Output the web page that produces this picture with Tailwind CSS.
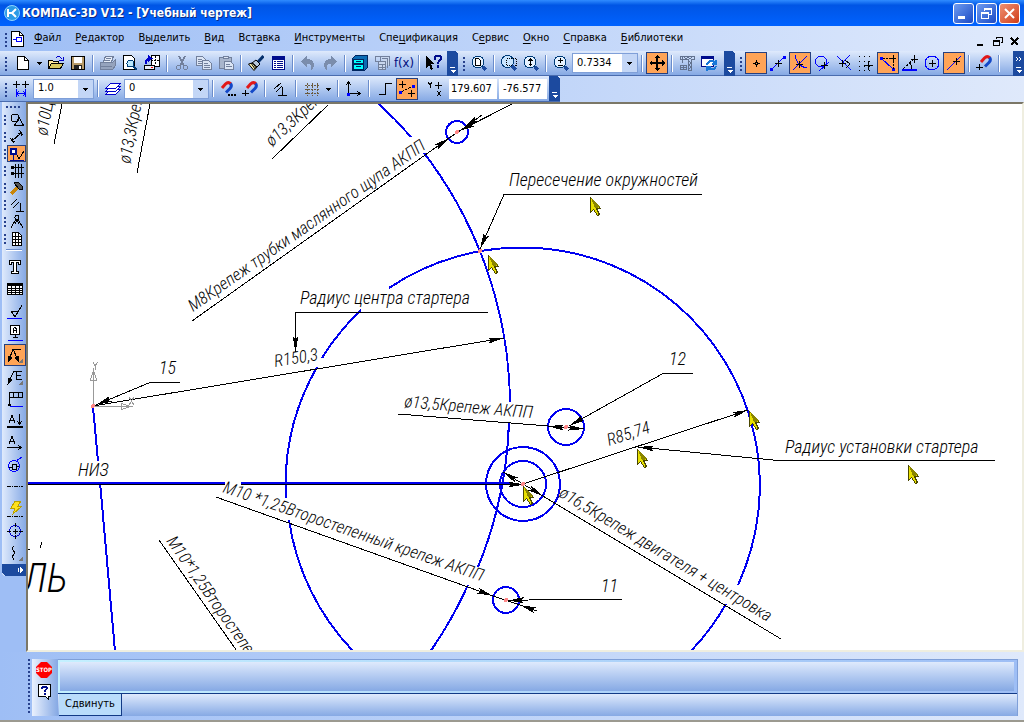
<!DOCTYPE html>
<html lang="ru">
<head>
    <meta charset="UTF-8">
    <meta name="viewport" content="width=device-width, initial-scale=1.0">
    <title>КОМПАС-3D V12 - [Учебный чертеж]</title>
    <script src="https://cdn.jsdelivr.net/npm/@tailwindcss/browser@4"></script>
</head>
<body class="bg-[#9ebef5] font-['DejaVu_Sans_Condensed','DejaVu_Sans',sans-serif] text-[11px] text-black">
<div class="flex flex-col h-screen overflow-hidden fill-none stroke-black [shape-rendering:crispEdges]">

    <!-- Title bar -->
    <header class="flex items-center h-[26px] shrink-0 px-1 bg-linear-to-b from-[#2f8bff] via-[#0055e5] via-20% to-[#0062ff]">
        <svg class="w-4 h-4 [shape-rendering:auto]" viewBox="0 0 16 16"><circle cx="8" cy="8" r="7.5" fill="#2b9be6" stroke="#8fd4ff"/><path d="M4 4v8M5 8h3M12 4 8 8l4 4" stroke="#fff" stroke-width="2"/></svg>
        <h1 class="flex-1 ml-[2px] text-[12px] font-bold text-white [text-shadow:1px_1px_#0b2a80]">КОМПАС-3D V12 - [Учебный чертеж]</h1>
        <div class="flex gap-[2px]">
            <button aria-label="Свернуть" class="w-[21px] h-[21px] rounded-[3px] border border-white bg-linear-to-br from-[#6f9bf0] to-[#1c48c4]"><svg class="w-[19px] h-[19px]" viewBox="0 0 19 19"><path d="M4 13.5h7" stroke="#fff" stroke-width="3"/></svg></button>
            <button aria-label="Восстановить" class="w-[21px] h-[21px] rounded-[3px] border border-white bg-linear-to-br from-[#6f9bf0] to-[#1c48c4]"><svg class="w-[19px] h-[19px]" viewBox="0 0 19 19"><path d="M7.5 7V4.5h7v6H12M7 5h8M4.5 8.5h7v6h-7zM4 9h8" stroke="#fff"/></svg></button>
            <button aria-label="Закрыть" class="w-[21px] h-[21px] rounded-[3px] border border-white bg-linear-to-br from-[#ee8f70] to-[#cf3a12]"><svg class="w-[19px] h-[19px] [shape-rendering:auto]" viewBox="0 0 19 19"><path d="m5 5 9 9M14 5l-9 9" stroke="#fff" stroke-width="2"/></svg></button>
        </div>
    </header>

    <!-- Menu -->
    <nav class="flex items-center h-[25px] shrink-0 px-1 bg-linear-to-r from-[#9ebef5] to-[#e0eafc]">
        <svg class="w-[3px] h-4 mr-1" viewBox="0 0 3 16"><path d="M1.5 2v14" stroke="#27418d" stroke-width="2" stroke-dasharray="2 2"/></svg>
        <svg class="w-[13px] h-4" viewBox="0 0 13 16"><path d="M.5.5h8l4 4v11H.5z" fill="#fff"/><path d="M8.5.5v4h4"/><path d="M2 8.5h3M5.5 6.5h5v4h-5z" stroke="#00f"/></svg>
        <div class="flex flex-1 items-center gap-[14px] ml-[10px] [&_u]:underline-offset-2">
            <button><u>Ф</u>айл</button>
            <button><u>Р</u>едактор</button>
            <button>В<u>ы</u>делить</button>
            <button><u>В</u>ид</button>
            <button>Вст<u>а</u>вка</button>
            <button><u>И</u>нструменты</button>
            <button>Спе<u>ц</u>ификация</button>
            <button>С<u>е</u>рвис</button>
            <button><u>О</u>кно</button>
            <button><u>С</u>правка</button>
            <button><u>Б</u>иблиотеки</button>
        </div>
        <div class="flex gap-1 pt-1 [&_svg]:w-3 [&_svg]:h-3">
            <button aria-label="Свернуть документ"><svg viewBox="0 0 12 12"><path d="M1 10h6" stroke-width="2"/></svg></button>
            <button aria-label="Восстановить документ"><svg viewBox="0 0 12 12"><path d="M4.500 4V2.500h6v5H9M4 2h7M1.500 5.500h6v5h-6zM1 6h7"/></svg></button>
            <button aria-label="Закрыть документ"><svg viewBox="0 0 12 12"><path d="m3 3 7 7M10 3l-7 7" stroke-width="2"/></svg></button>
        </div>
    </nav>

    <!-- Standard, view and snap toolbars -->
    <div class="flex h-[25px] shrink-0 bg-linear-to-b from-[#dfeafc] to-[#86a9e4] border-b border-[#4a6cae] [&_button]:h-[22px] [&_button]:w-[22px] [&_button]:grid [&_button]:place-items-center [&_button>svg]:w-4 [&_button>svg]:h-4">
        <div class="flex items-center w-[458px] shrink-0 pl-1">
            <svg class="w-2 h-4" viewBox="0 0 8 16"><path d="M1.5 2v14" stroke="#27418d" stroke-width="2" stroke-dasharray="2 2"/></svg>
            <button aria-label="Создать"><svg viewBox="0 0 16 16"><path d="M2.5 1.5h7l4 4v9h-11z" fill="#fff"/><path d="M9.5 1.5v4h4"/></svg></button>
            <svg class="w-[11px] h-4" viewBox="0 0 11 16"><path d="M3 7h5L5.5 10z" fill="#000" stroke="none"/></svg>
            <button aria-label="Открыть"><svg viewBox="0 0 16 16"><path d="M.5 13.5v-8h4l1 1h5v2" fill="#ffe79a"/><path d="m.5 13.5 3-5h12l-3 5z" fill="#d8c860"/><path d="M8 3c2-2 4-2 6 1m1-2v3h-4" stroke="#00c"/></svg></button>
            <button aria-label="Сохранить"><svg viewBox="0 0 16 16"><path d="M1.5 1.5h13v13h-13z" fill="#b89c6a"/><path d="M4 2h8v6H4z" fill="#fff" stroke="none"/><path d="M4 10h8v4H4z" fill="#222" stroke="none"/><path d="M9 11h2v3H9z" fill="#fff" stroke="none"/></svg></button>
            <i class="w-[2px] h-[17px] mx-[3px] bg-[#6a8ccb] border-r border-white"></i>
            <button aria-label="Печать"><svg viewBox="0 0 16 16" stroke="#72809c"><path d="m3.5 7 2-6h8l-2 6z" fill="#e6edf8"/><path d="M.5 7.5h12l3-3v6l-3 4H.5z" fill="#95a3bd"/><path d="M6 3h5M5 5h5M1 11h11M3 14h8"/></svg></button>
            <button aria-label="Просмотр"><svg viewBox="0 0 16 16"><path d="M1.5.5h8l3 3v11h-11z" fill="#fff"/><circle cx="8.5" cy="8.5" r="3.5" fill="#bdeaff" stroke="#003c78"/><path d="m11 11 4 4" stroke="#003c78" stroke-width="2"/></svg></button>
            <button aria-label="Вывод документов"><svg viewBox="0 0 16 16"><path d="M7.5.5h8v11h-8z" fill="#fff"/><path d="M11.5 1v9M7 5.5h8" stroke-dasharray="2 1"/><path d="M.5 10.5h10v4H.5z" fill="#e8eef8"/><path d="M1.5 9C1.500 5 3 3.500 6 3.500M4 1l3 2.500L4 6" stroke="#00c" stroke-width="2"/><path d="M7 12.5h2" stroke="red"/></svg></button>
            <i class="w-[2px] h-[17px] mx-[3px] bg-[#6a8ccb] border-r border-white"></i>
            <button aria-label="Вырезать"><svg viewBox="0 0 16 16" stroke="#72809c"><path d="m5 1 5 10M11 1 6 11" stroke-width="2"/><circle cx="4.5" cy="12.5" r="2"/><circle cx="11.5" cy="12.5" r="2"/></svg></button>
            <button aria-label="Копировать"><svg viewBox="0 0 16 16" stroke="#72809c"><path d="M.5 1.5h6l3 3v6h-9z" fill="#dbe5f5"/><path d="M6.5 5.5h6l3 3v6h-9z" fill="#dbe5f5"/><path d="M2 4.5h4M2 6.5h4M2 8.5h4M8 8.5h4M8 10.5h6M8 12.5h6"/></svg></button>
            <button aria-label="Вставить"><svg viewBox="0 0 16 16" stroke="#72809c"><path d="M1.5 2.5h12v11h-12z" fill="#a8b5cc"/><path d="M5 1.5h5v2H5z" fill="#dbe5f5"/><path d="M6.5 6.5h6l3 3v5h-9z" fill="#dbe5f5"/><path d="M8 9.5h4M8 11.5h6"/></svg></button>
            <i class="w-[2px] h-[17px] mx-[3px] bg-[#6a8ccb] border-r border-white"></i>
            <button aria-label="Копировать свойства"><svg class="[shape-rendering:auto]" viewBox="0 0 16 16"><path d="m15.500 1-5.500 6" stroke="#05306c" stroke-width="3"/><path d="m8 5 4 4-3 3-5-4z" fill="#b8c9dc"/><path d="M4 8 9 12l-3 3.500L.5 9z" fill="#fff6b0"/><path d="m3 8 4 6M5.500 8.500 8 13"/></svg></button>
            <button aria-label="Свойства"><svg viewBox="0 0 16 16"><path d="M2.5 1.5h12v13h-12z" fill="#fff" stroke="#000c8c"/><path d="M2 3h13" stroke="#000c8c" stroke-width="3"/><path d="M4 6.5h2M4 8.5h2M4 10.5h2M4 12.5h2M7 6.5h6M7 8.5h6M7 10.5h6M7 12.5h6" stroke="#000c8c"/></svg></button>
            <i class="w-[2px] h-[17px] mx-[3px] bg-[#6a8ccb] border-r border-white"></i>
            <button aria-label="Отменить"><svg viewBox="0 0 16 16"><path d="M7 1v3c5 0 7 3 7 6 0 2-1 4-3 5 1-4 0-6-4-6v3L1 6.5z" fill="#7b8dac" stroke="none"/></svg></button>
            <button aria-label="Повторить"><svg viewBox="0 0 16 16"><path d="M9 1v3c-5 0-7 3-7 6 0 2 1 4 3 5-1-4 0-6 4-6v3l6-5.5z" fill="#7b8dac" stroke="none"/></svg></button>
            <i class="w-[2px] h-[17px] mx-[3px] bg-[#6a8ccb] border-r border-white"></i>
            <button aria-label="Менеджер библиотек"><svg viewBox="0 0 16 16"><path d="m.5 3.5 3-3h12v12l-3 3H.5z" fill="#0a6bb4" stroke="#00255e"/><path d="M1.5 4.5h10v4h-10zM1.500 9.500h10v5h-10z" fill="#0ff" stroke="#00255e"/><path d="M4 6.5h5M4 11.5h5" stroke="#00255e"/></svg></button>
            <button aria-label="Переменные"><svg viewBox="0 0 16 16" stroke="#72809c"><circle cx="4" cy="4" r="3"/><path d="M5.5 1.5h10v9M7.5 3.5h6v9M4.5 6.5h7v8h-7z" fill="#c9d7ee"/><path d="M4 9.5h8M4 12.5h8M8.5 9v6"/></svg></button>
            <button aria-label="Функции" class="text-[13px] text-[#000c7c]">f(x)</button>
            <i class="w-[2px] h-[17px] mx-[3px] bg-[#6a8ccb] border-r border-white"></i>
            <button aria-label="Справка"><svg viewBox="0 0 16 16"><path d="M0 1v12l3-3 2 5 2-1-2-5h4z" fill="#000" stroke="none"/><path d="M9 5V3c0-3 6-3 6 0 0 3-3 2-3 6M12 10v3" stroke="#000c8c" stroke-width="2"/></svg></button>
            <span class="flex-1"></span>
            <svg class="w-[11px] h-[25px]" viewBox="0 0 11 25"><path d="M0 0h8l3 3v22H0z" fill="#1c4a9f" stroke="none"/><path d="M3 16.5h5" stroke="#fff"/><path d="M3 19h6l-3 3z" fill="#fff" stroke="none"/></svg>
        </div>
        <div class="flex items-center w-[277px] shrink-0 pl-1">
            <svg class="w-[6px] h-4" viewBox="0 0 6 16"><path d="M1.5 2v14" stroke="#27418d" stroke-width="2" stroke-dasharray="2 2"/></svg>
            <button aria-label="Показать лист"><svg viewBox="0 0 16 16"><circle cx="7" cy="7" r="6" fill="#e6f2ff" stroke="#003c78"/><path d="M4.5 3.5h3l2 2v5h-5z" fill="#fff"/><path d="m12 12 3 3" stroke="#1c4a9f" stroke-width="3"/></svg></button>
            <i class="w-[2px] h-[17px] mx-[3px] bg-[#6a8ccb] border-r border-white"></i>
            <button aria-label="Увеличить рамкой"><svg viewBox="0 0 16 16"><circle cx="6.5" cy="6.5" r="6" fill="#c8e4ff" stroke="#003c78"/><path d="M5.5 3.5h10v7h-10z" stroke-dasharray="1 1"/><path d="m11 11 4 4" stroke="#1c4a9f" stroke-width="3"/></svg></button>
            <button aria-label="Приблизить"><svg viewBox="0 0 16 16"><circle cx="7" cy="7" r="6" fill="#e6f2ff" stroke="#003c78"/><path d="M7.5 3v8M6 4.5h3M5 5.500h5M6 9.500h3"/><path d="m12 12 3 3" stroke="#1c4a9f" stroke-width="3"/></svg></button>
            <i class="w-[2px] h-[17px] mx-[3px] bg-[#6a8ccb] border-r border-white"></i>
            <button aria-label="Масштаб"><svg viewBox="0 0 16 16"><circle cx="7" cy="7" r="6" fill="#e6f2ff" stroke="#003c78"/><path d="M7.5 3v5M5 5.5h5M5 10.5h5"/><path d="m12 12 3 3" stroke="#1c4a9f" stroke-width="3"/></svg></button>
            <label class="grid grid-cols-[1fr_15px] w-[66px] h-5 border border-[#7f9fd8] bg-white">
                <select aria-label="Масштаб вида" class="col-span-2 col-start-1 row-start-1 appearance-none pl-1 outline-none"><option>0.7334</option></select>
                <svg class="col-start-2 row-start-1 w-[15px] h-[18px] pointer-events-none" viewBox="0 0 15 18"><path d="M0 0h15v18H0z" fill="#c3d6f6" stroke="none"/><path d="M5 8h5l-2.500 3z" fill="#000" stroke="none"/></svg>
            </label>
            <i class="w-[2px] h-[17px] mx-[3px] bg-[#6a8ccb] border-r border-white"></i>
            <button aria-label="Сдвинуть" class="bg-[#ffa457] border border-[#26407f]"><svg viewBox="0 0 16 16"><path d="M8 1v14M1 8h14" stroke-width="2"/><path d="m8 0 3 3H5zM8 16l3-3H5zM0 8l3-3v6zM16 8l-3-3v6z" fill="#000" stroke="none"/></svg></button>
            <i class="w-[2px] h-[17px] mx-[3px] bg-[#6a8ccb] border-r border-white"></i>
            <button aria-label="Перестроить"><svg viewBox="0 0 16 16" stroke="#62728f"><path d="M1.5 5V1.5h14v3h-3v11h-3v-11h-8"/><path d="m10 6 2 2-2 2 2 2-2 2M3.5 2v6M1.5 10.5h6v4h-6zM1 12.5h7M4.5 10v5M5 2l2 2 2-2 2 2 2-2"/></svg></button>
            <button aria-label="Обновить изображение"><svg viewBox="0 0 16 16"><path d="M.5 1.5h12v10H.5z" fill="#fff" stroke="#000c8c"/><path d="M0 2.500h13" stroke="#000c8c" stroke-width="3"/><path d="M6 10c1-5 6-5 8-2M15 5v4h-4M15 11c-1 4-6 4-8 2M6 16v-4h4" stroke="#1878d8" stroke-width="2"/></svg></button>
            <span class="flex-1"></span>
            <svg class="w-[11px] h-[25px]" viewBox="0 0 11 25"><path d="M0 0h8l3 3v22H0z" fill="#1c4a9f" stroke="none"/><path d="M3 16.5h5" stroke="#fff"/><path d="M3 19h6l-3 3z" fill="#fff" stroke="none"/></svg>
        </div>
        <div class="flex items-center flex-1 pl-1">
            <svg class="w-[6px] h-4" viewBox="0 0 6 16"><path d="M1.5 2v14" stroke="#27418d" stroke-width="2" stroke-dasharray="2 2"/></svg>
            <button aria-label="Ближайшая точка" class="bg-[#ffa457] border border-[#26407f]"><svg viewBox="0 0 16 16"><path d="M8.5 5v2M8.5 10v2M5 8.5h2M10 8.5h2M7.5 7.5h2v2h-2z"/></svg></button>
            <button aria-label="Середина"><svg viewBox="0 0 16 16"><path d="M1 15 15 1" stroke="#00f"/><path d="M0 14h3M13 2h3" stroke="#00f" stroke-width="3"/><path d="M8.5 5v7M5 8.500h7"/></svg></button>
            <button aria-label="Пересечение" class="bg-[#ffa457] border border-[#26407f]"><svg viewBox="0 0 16 16"><path d="M1 15 15 1M3 0c1 7 4 12 12 13" stroke="#00f"/><path d="M7.5 6v7M4 9.5h7"/></svg></button>
            <button aria-label="Касание"><svg viewBox="0 0 16 16"><circle cx="7" cy="6.5" r="5.5" stroke="#00f"/><path d="m5 16 10-9" stroke="#00f"/><path d="M10.5 7v7M7 10.5h7"/></svg></button>
            <button aria-label="Нормаль"><svg viewBox="0 0 16 16"><path d="m1 1 14 14M6 8l8-8" stroke="#00f"/><path d="M6.5 5v7M3 8.500h7M9 5l5 4-4 4"/></svg></button>
            <button aria-label="По сетке"><svg viewBox="0 0 16 16"><path d="M1 1.5h15M1 6.5h15M1 11.5h15M1 15.5h15" stroke-dasharray="1 4"/><path d="M10.5 6v9M6 10.5h9"/></svg></button>
            <button aria-label="Выравнивание" class="bg-[#ffa457] border border-[#26407f]"><svg viewBox="0 0 16 16"><path d="m1 3 12 11" stroke="#00f"/><path d="M0 3h3M12 14h3" stroke="#00f" stroke-width="3"/><path d="M3 3.5h8M13.5 6v8" stroke-dasharray="2 1"/><path d="M13.5 0v7M10 3.5h6"/></svg></button>
            <button aria-label="Угловая привязка"><svg viewBox="0 0 16 16"><path d="M0 14.500h15" stroke="#00f" stroke-width="2"/><path d="m1 14 11-10" stroke-dasharray="3 1"/><path d="M12.5 0v8M9 4.5h7M7 8c2 1 3 3 3 6"/></svg></button>
            <button aria-label="Центр"><svg viewBox="0 0 16 16"><circle cx="8" cy="8" r="7" stroke="#00f"/><path d="M8.5 5v7M5 8.500h7"/></svg></button>
            <button aria-label="Точка на кривой" class="bg-[#ffa457] border border-[#26407f]"><svg viewBox="0 0 16 16"><path d="M1 15 15 1" stroke="#00f"/><path d="M10.5 3v7M7 6.500h7"/></svg></button>
            <i class="w-[2px] h-[17px] mx-[3px] bg-[#6a8ccb] border-r border-white"></i>
            <button aria-label="Привязки"><svg class="[shape-rendering:auto]" viewBox="0 0 16 16"><path d="M5 7 8.500 3c2-2 4-1.500 5.500 0" stroke="#e21818" stroke-width="3"/><path d="M13.500 2.500c1.500 2 1 3.500-.5 5l-4 4" stroke="#1348c8" stroke-width="3"/><path d="M3.5 9v6M0 12.5h7"/></svg></button>
            <i class="w-[2px] h-[17px] mx-[3px] bg-[#6a8ccb] border-r border-white"></i>
            <span class="flex-1"></span>
            <svg class="w-[11px] h-[25px]" viewBox="0 0 11 25"><path d="M0 0h11v25H0z" fill="#1c4a9f" stroke="none"/><path d="m3 6 2 2-2 2m3-4 2 2-2 2M3 16.5h5" stroke="#fff"/><path d="M3 19h6l-3 3z" fill="#fff" stroke="none"/></svg>
        </div>
    </div>

    <!-- Current state toolbar -->
    <div class="flex h-[26px] shrink-0 bg-linear-to-r from-[#9ebef5] to-[#dfe9fb]">
        <div class="flex items-center w-[560px] pl-1 bg-linear-to-b from-[#dfeafc] to-[#86a9e4] border-b border-[#4a6cae] [&_button]:h-[22px] [&_button]:w-[22px] [&_button]:grid [&_button]:place-items-center [&_button>svg]:w-4 [&_button>svg]:h-4">
            <svg class="w-[6px] h-4" viewBox="0 0 6 16"><path d="M1.5 2v14" stroke="#27418d" stroke-width="2" stroke-dasharray="2 2"/></svg>
            <button aria-label="Шаг курсора"><svg viewBox="0 0 16 16"><path d="M3.5 0v7M0 3.5h7M12.5 0v7M9 3.5h7"/><path d="M3.5 8v8M12.5 8v8M4 12.5h8M6 10l-2 2.5L6 15M10 10l2 2.5L10 15" stroke="#00f"/></svg></button>
            <label class="grid grid-cols-[1fr_15px] w-[61px] h-5 ml-px border border-[#7f9fd8] bg-white">
                <select aria-label="Текущий шаг" class="col-span-2 col-start-1 row-start-1 appearance-none pl-1 outline-none"><option>1.0</option></select>
                <svg class="col-start-2 row-start-1 w-[15px] h-[18px] pointer-events-none" viewBox="0 0 15 18"><path d="M0 0h15v18H0z" fill="#c3d6f6" stroke="none"/><path d="M5 8h5l-2.500 3z" fill="#000" stroke="none"/></svg>
            </label>
            <i class="w-[2px] h-[17px] mx-[3px] bg-[#6a8ccb] border-r border-white"></i>
            <button aria-label="Слои"><svg viewBox="0 0 16 16" stroke="#00c"><path d="M.5 13.5h10l5-5h-10z" fill="#fff"/><path d="M.5 10.5h10l5-5h-10z" fill="#fff"/><path d="M.5 7.500h10l5-5h-10z" fill="#fff"/></svg></button>
            <label class="grid grid-cols-[1fr_15px] w-[85px] h-5 border border-[#7f9fd8] bg-white">
                <select aria-label="Текущий слой" class="col-span-2 col-start-1 row-start-1 appearance-none pl-1 outline-none"><option>0</option></select>
                <svg class="col-start-2 row-start-1 w-[15px] h-[18px] pointer-events-none" viewBox="0 0 15 18"><path d="M0 0h15v18H0z" fill="#c3d6f6" stroke="none"/><path d="M5 8h5l-2.500 3z" fill="#000" stroke="none"/></svg>
            </label>
            <i class="w-[2px] h-[17px] mx-[3px] bg-[#6a8ccb] border-r border-white"></i>
            <button aria-label="Настройка привязок"><svg class="[shape-rendering:auto]" viewBox="0 0 16 16"><path d="M2 7 5.500 3c2-2 4-1.500 5.500 0" stroke="#e21818" stroke-width="3"/><path d="M10.500 2.500c1.500 2 1 3.500-.5 5l-4 4" stroke="#1348c8" stroke-width="3"/><path d="M8 14h2m1 0h2m1 0h2" stroke-width="2"/></svg></button>
            <button aria-label="Запретить привязки"><svg class="[shape-rendering:auto]" viewBox="0 0 16 16"><path d="M5 7 8.500 3c2-2 4-1.500 5.500 0" stroke="#e21818" stroke-width="3"/><path d="M13.500 2.500c1.500 2 1 3.500-.5 5l-4 4" stroke="#1348c8" stroke-width="3"/><path d="M3.5 9v6M0 12.5h7"/></svg></button>
            <i class="w-[2px] h-[17px] mx-[3px] bg-[#6a8ccb] border-r border-white"></i>
            <button aria-label="Параметрический режим"><svg viewBox="0 0 16 16"><path d="m2 8 7-6M4 11l6-6M10.5 6v8M6 14.5h9"/></svg></button>
            <i class="w-[2px] h-[17px] mx-1 bg-[#6a8ccb] border-r border-white"></i>
            <button aria-label="Сетка"><svg viewBox="0 0 16 16" stroke="#6b5a3c"><path d="M3.5 2v13M8.5 2v13M13.5 2v13M1 4.5h15M1 8.5h15M1 12.5h15" stroke-dasharray="2 1"/></svg></button>
            <svg class="w-[11px] h-4" viewBox="0 0 11 16"><path d="M3 7h5L5.5 10z" fill="#000" stroke="none"/></svg>
            <i class="w-[2px] h-[17px] mx-[3px] bg-[#6a8ccb] border-r border-white"></i>
            <button aria-label="Система координат"><svg viewBox="0 0 16 16"><path d="M3.5 2v11M4 12.5h11M1 4l2.500-3L6 4M12 10l3 2.500L12 15"/><path d="M2 13h3" stroke="#00f" stroke-width="3"/></svg></button>
            <i class="w-[2px] h-[17px] mx-1 bg-[#6a8ccb] border-r border-white"></i>
            <button aria-label="Ортогональное черчение"><svg viewBox="0 0 16 16"><path d="M2 13.5h6.5v-11H15"/></svg></button>
            <button aria-label="Округление" class="bg-[#ffa457] border border-[#26407f]"><svg viewBox="0 0 16 16"><path d="M3.5 0v7M0 3.500h7M12.500 9v7M9 12.500h7"/><path d="m2 11 12-6" stroke-dasharray="3 1"/><path d="M0 11h3M13 5h3" stroke="#00f" stroke-width="3"/></svg></button>
            <svg class="w-[22px] h-4 ml-2 mr-[1px]" viewBox="0 0 22 16"><path d="m2 1 2 3 2-3M4.5 4v3M12.5 1v7M9 4.5h7M11 10l4 5M15 10l-4 5"/></svg>
            <input aria-label="Координата X" value="179.607" class="w-[48px] h-5 px-[2px] bg-white text-[11px]">
            <input aria-label="Координата Y" value="-76.577" class="w-[48px] h-5 px-1 ml-[2px] bg-white text-[11px]">
            <span class="flex-1"></span>
            <svg class="w-[11px] h-[25px]" viewBox="0 0 11 25"><path d="M0 0h8l3 3v22H0z" fill="#1c4a9f" stroke="none"/><path d="M3 16.5h5" stroke="#fff"/><path d="M3 19h6l-3 3z" fill="#fff" stroke="none"/></svg>
        </div>
    </div>

    <div class="flex flex-1 min-h-0">
        <!-- Compact panel -->
        <aside class="w-[26px] shrink-0 bg-[#9ebef5] pl-[2px]">
            <div class="flex flex-col items-end h-[474px] bg-linear-to-r from-[#dfeafc] to-[#86a9e4] rounded-b-sm [&_button]:w-[22px] [&_button]:h-[22px] [&_button]:shrink-0 [&_button]:grid [&_button]:place-items-center [&_button>svg]:w-4 [&_button>svg]:h-4">
                <svg class="w-[22px] h-[9px] shrink-0" viewBox="0 0 22 9"><path d="M2 5h16" stroke="#27418d" stroke-width="2" stroke-dasharray="2 2"/></svg>
                <div class="flex w-full">
                    <svg class="w-[5px] h-[136px] shrink-0" viewBox="0 0 5 136"><path d="M3 4v130" stroke="#27418d" stroke-width="2" stroke-dasharray="2 2 2 2 2 7"/></svg>
                    <div class="flex flex-col [&>button]:w-[19px] [&>button]:h-[17px] [&>button>svg]:w-[14px] [&>button>svg]:h-[14px]">
                        <button aria-label="Геометрия"><svg viewBox="0 0 14 14"><circle cx="5" cy="5" r="4"/><path d="m9 4 4.500 8.500h-9z"/></svg></button>
                        <button aria-label="Размеры"><svg viewBox="0 0 14 14"><path d="m2 11 9-8M0 8l4 5M9 0l4 5M2 8v3h3M8 3h3v3"/></svg></button>
                        <button aria-label="Обозначения" class="bg-[#ffa457] border border-[#26407f]"><svg viewBox="0 0 14 14"><path d="M1 2h5v5H1z" fill="#fff" stroke="#000c8c" stroke-width="2"/><path d="M3.500 8v5M0 13.500h14" stroke="#000c8c"/><path d="m7 8 2 4 5-8"/></svg></button>
                        <button aria-label="Редактирование"><svg viewBox="0 0 14 14"><path d="M5.5 0v14M8.500 0v14M11.500 0v14M1 3.500h13M1 9.500h13M1.500 2.500h2v2h-2zM1.500 8.500h2v2h-2z"/></svg></button>
                        <button aria-label="Параметризация"><svg viewBox="0 0 14 14"><path d="m1 13 8-8" stroke="#c8860c" stroke-width="3"/><path d="m4 2 4-1 5 5-1 3-3-1z" fill="#555"/></svg></button>
                        <button aria-label="Измерения"><svg viewBox="0 0 14 14"><path d="m1 7 6-6M3 10l6-6M10.500 5v8M6 13.500h8"/></svg></button>
                        <button aria-label="Выделение"><svg viewBox="0 0 14 14"><circle cx="7" cy="2.500" r="2"/><path d="M6 4 1 13M8 4l5 9M5 9l2-4 2 4"/></svg></button>
                        <button aria-label="Спецификация"><svg viewBox="0 0 14 14"><path d="M2.500.5h6l3 3v10h-9z" fill="#fff"/><path d="M3 4.500h8M3 7.500h8M3 10.500h8M5.500 1v12M8.500 1v12"/></svg></button>
                    </div>
                </div>
                <i class="w-4 h-[2px] mt-[2px] mb-[5px] mr-1 shrink-0 bg-[#6a8ccb] border-b border-white"></i>
                <button aria-label="Ввод текста"><svg viewBox="0 0 16 16"><path d="M2.5 1.5h11v4h-2v-2h-2v9h2v2h-7v-2h2v-9h-2v2h-2z" fill="#fff"/></svg></button>
                <button aria-label="Ввод таблицы"><svg viewBox="0 0 16 16"><path d="M.5 2.5h15v11H.5z" fill="#fff"/><path d="M0 3.5h16" stroke-width="3"/><path d="M1 7.5h14M1 9.5h14M1 11.5h14M4.5 4v9M8.5 4v9M12.5 4v9"/></svg></button>
                <button aria-label="Шероховатость"><svg viewBox="0 0 16 16"><path d="m4 8 4 6 7-12M4 8.5h7"/><path d="M0 15.5h15" stroke="#00f"/></svg></button>
                <button aria-label="База"><svg viewBox="0 0 16 16"><path d="M3.500.5h9v9h-9z" fill="#fff"/><path d="M6.500 8V4l1.500-2 1.500 2v4M7 5.500h3M8.500 10v3M6 12.500h5"/><path d="M1 15.5h15" stroke="#00f"/></svg></button>
                <button aria-label="Линия-выноска" class="bg-[#ffa457] border border-[#26407f]"><svg viewBox="0 0 16 16"><path d="m2 13 4-11h8M6 2l5 11"/><path d="m1 15 0-6 4 2zM12 15 8 11l3-2z" fill="#000"/><path d="M16 11v5h-5z" fill="#777" stroke="none"/></svg></button>
                <button aria-label="Обозначение позиций"><svg viewBox="0 0 16 16"><path d="m2 12 5-10h2M15 2H9v8h6M9 6h5"/><path d="m1 15 1-6 3 2z" fill="#000"/><path d="M16 11v5h-5z" fill="#777" stroke="none"/></svg></button>
                <button aria-label="Допуск формы"><svg viewBox="0 0 16 16"><path d="M2.5 14V1.5h13v5h-13M6.5 2v5M11.5 2v5"/><path d="M1 14h3" stroke-width="2"/><path d="M3 15.5h13" stroke="#00f"/></svg></button>
                <button aria-label="Линия разреза"><svg viewBox="0 0 16 16"><path d="M2 10 5 2l3 8M3 7.5h4M12.5 1v10M10 8l2.5 3L15 8"/><path d="M0 14h16" stroke-width="2"/></svg></button>
                <button aria-label="Стрелка взгляда"><svg viewBox="0 0 16 16"><path d="M2 9 5 1l3 8M3 6.5h4M0 12.5h14M11 10l3 2.500-3 2.500"/></svg></button>
                <button aria-label="Выносной элемент"><svg viewBox="0 0 16 16"><circle cx="7" cy="9" r="5.5" stroke="#00f"/><path d="M10 4c1-3 3-2 5-4" stroke="#00f"/><path d="M2 10.500h3v-3h4v5h-4v-2M9 9.500h3"/></svg></button>
                <button aria-label="Осевая линия"><svg viewBox="0 0 16 16"><path d="M0 7.5h16" stroke-dasharray="4 1 1 1"/></svg></button>
                <button aria-label="Автоосевая"><svg viewBox="0 0 16 16"><path d="M8 0h6l-3 5h4L6 13l2-6H4z" fill="#ffe11a" stroke="#b8a000"/><path d="M0 15.5h16" stroke-dasharray="4 1 1 1"/></svg></button>
                <button aria-label="Обозначение центра"><svg viewBox="0 0 16 16"><circle cx="8" cy="8" r="5.5" stroke="#00c"/><path d="M8.5 0v4M8.5 6v5M8.5 12v4M0 8.5h4M6 8.5h5M12 8.5h4"/></svg></button>
                <button aria-label="Волнистая линия"><svg viewBox="0 0 16 16"><path d="M7 1c-5 4 3 5 0 8s-1 4 0 6"/><path d="M16 11v5h-5z" fill="#777" stroke="none"/></svg></button>
                <svg class="w-6 flex-1" viewBox="0 0 24 12" preserveAspectRatio="none"><path d="M0 0h24v12H3L0 9z" fill="#1c4a9f" stroke="none"/><path d="M16.5 4v4M18 3l3 3-3 3z" stroke="#fff" fill="#fff"/></svg>
            </div>
        </aside>

        <!-- Drawing -->
        <main class="flex-1 min-w-0 bg-white border-2 border-[#7b7767] border-b-[#efeee0] border-r-[#efeee0]">
            <svg class="w-full h-full font-['Roboto_Condensed','Liberation_Sans_Narrow','Open_Sans',sans-serif] font-light italic text-[17px]" viewBox="28 104 994 546" preserveAspectRatio="xMinYMin slice">
                <defs>
                    <marker id="arrow" markerUnits="userSpaceOnUse" markerWidth="16" markerHeight="6" refX="16" refY="3" orient="auto-start-reverse"><path d="M16 3 0 0l3 3-3 3z" fill="#000" stroke="none"/></marker>
                    <symbol id="pointer" viewBox="0 0 12 20" width="12" height="20" overflow="visible"><path d="M.5.5v15l3-3 4 6 2-1-3-6h4z" fill="#e8e000" stroke="#4a4700"/><path d="m1 1 9 9-5 1z" fill="#8a8500" stroke="none"/></symbol>
                </defs>

                <!-- Contours -->
                <g stroke="#0000f0" stroke-width="2">
                    <path d="M378 103a417 417 0 0 1 33 34M424 153A417 417 0 0 1 510 402M509 422A417 417 0 0 1 478 567M468 585A417 417 0 0 1 430 652"/>
                    <path d="M389 288A238 238 0 0 1 738 585M726 604A238 238 0 0 1 690 652M361 310A238 238 0 0 0 322 358M317 367A238 238 0 0 0 286 498M289 520A238 238 0 0 0 354 652"/>
                    <circle cx="457" cy="132" r="11"/>
                    <circle cx="566" cy="427" r="18"/>
                    <circle cx="523" cy="484" r="23"/>
                    <circle cx="523" cy="484" r="37"/>
                    <circle cx="506" cy="600" r="13"/>
                    <path d="M28 483h197M241 483h270M93 407l5 54M100 482l15 169"/>
                </g>

                <!-- Dimension and leader lines -->
                <path d="M28 484.500h197"/>
                <path d="M241 484.500h283" marker-end="url(#arrow)"/>
                <path d="M62 104l-8 40M150 104l-13 69M328 105l-56 54M159 540l80 114"/>
                <path d="M192 321 449 138" marker-end="url(#arrow)"/>
                <path d="M449 138l15-10"/>
                <path d="M482 115 464 128" marker-end="url(#arrow)"/>
                <path d="M514 103 459 131" marker-end="url(#arrow)"/>
                <path d="M702 194.5H504L480 249" marker-end="url(#arrow)"/>
                <path d="M488 312.5H295.5V352" marker-end="url(#arrow)"/>
                <path d="M93 406 504 338" marker-end="url(#arrow)"/>
                <path d="M180 382.5H150L96 405" marker-end="url(#arrow)"/>
                <path d="M693 373.5H663L569 426" marker-end="url(#arrow)"/>
                <path d="M398 414 548 426l36 3" marker-end="url(#arrow)"/>
                <path d="M566 428 548 426" marker-end="url(#arrow)"/>
                <path d="M523 484 748 410" marker-end="url(#arrow)"/>
                <path d="M995 460.5H778L638 447" marker-end="url(#arrow)"/>
                <path d="M781 639 503 472" marker-end="url(#arrow)"/>
                <path d="M523 484 543 496" marker-end="url(#arrow)"/>
                <path d="M216 497 493 596" marker-end="url(#arrow)"/>
                <path d="M493 596l27 9"/>
                <path d="M537 611 520 605" marker-end="url(#arrow)"/>
                <path d="M622 599.5H550L508 600.5" marker-end="url(#arrow)"/>
                <path d="M40 548l2-6M28 549h2"/>

                <g stroke="#999">
                    <path d="M93.5 406V370M93 406.5h38"/>
                    <path d="m93.5 370-3 10h6zM131 406.5l-10-3v6zM93 362l2 4 3-4M95 366v4M129 397l5 8M134 397l-5 8"/>
                </g>
                <g fill="#f88" stroke="none">
                    <circle cx="93" cy="406" r="2"/><circle cx="457" cy="132" r="2"/><circle cx="480" cy="251" r="2"/>
                    <circle cx="566" cy="427" r="2"/><circle cx="523" cy="484" r="2"/><circle cx="506" cy="600" r="2"/>
                </g>

                <!-- Annotations -->
                <g class="fill-black stroke-none">
                    <g class="text-[18px]">
                        <text x="509" y="186">Пересечение окружностей</text>
                        <text x="300" y="304">Радиус центра стартера</text>
                        <text x="785" y="453">Радиус установки стартера</text>
                        <text x="159" y="374">15</text>
                        <text x="669" y="365">12</text>
                        <text x="601" y="592">11</text>
                        <text x="78" y="476">НИЗ</text>
                    </g>
                    <text transform="translate(275 367) rotate(-9)">R150,3</text>
                    <text transform="translate(609 446) rotate(-18)">R85,74</text>
                    <text transform="translate(193 312) rotate(-35)">М8Крепеж трубки маслянного щупа АКПП</text>
                    <text transform="translate(404 407) rotate(5)">ø13,5Крепеж АКПП</text>
                    <text transform="translate(558 496) rotate(31)">ø16,5Крепеж двигателя + центровка</text>
                    <text transform="translate(222 492) rotate(19)">М10 *1,25Второстепенный крепеж АКПП</text>
                    <text transform="translate(166 541) rotate(55)">М10*1,25Второстепен</text>
                    <text transform="translate(47 136) rotate(-79)">ø10Ц</text>
                    <text transform="translate(130 164) rotate(-79)">ø13,3Креп</text>
                    <text transform="translate(272 147) rotate(-43)">ø13,3Креп</text>
                    <text x="23" y="592" class="text-[40px]">ЛЬ</text>
                </g>

                <use href="#pointer" x="590" y="197"/>
                <use href="#pointer" x="488" y="255"/>
                <use href="#pointer" x="749" y="411"/>
                <use href="#pointer" x="637" y="449"/>
                <use href="#pointer" x="908" y="465"/>
                <use href="#pointer" x="523" y="486"/>
            </svg>
        </main>
    </div>

    <!-- Property bar -->
    <footer class="flex h-[70px] shrink-0 pl-[27px] pr-[6px] pt-[7px] pb-1 bg-linear-to-r from-[#9ebef5] to-[#dfe9fb] border-b-2 border-[#9c9a90]">
        <svg class="w-[5px] h-[55px]" viewBox="0 0 5 55"><path d="M2 0v55" stroke="#27418d" stroke-width="2" stroke-dasharray="2 2"/></svg>
        <div class="flex flex-col items-center gap-[6px] w-[26px] pt-[3px] pr-[2px] bg-linear-to-r from-[#eaf1fd] to-[#86a9e4]">
            <button aria-label="Прервать команду"><svg class="w-4 h-4 [shape-rendering:auto]" viewBox="0 0 16 16"><path d="M5 0h6l5 5v6l-5 5H5l-5-5V5z" fill="#f00" stroke="none"/><text x="8" y="10" text-anchor="middle" class="text-[6px] font-bold fill-white stroke-none">STOP</text></svg></button>
            <button aria-label="Справка по команде"><svg class="w-4 h-4" viewBox="0 0 16 16"><path d="M2.5.5h12v12h-2v3l-3-3h-7z" fill="#fff"/><path d="M6 5V4c0-2 5-2 5 0s-2.500 1-2.500 4M8.500 9v2" stroke="#000c8c" stroke-width="2"/></svg></button>
        </div>
        <div class="flex flex-col flex-1 border-t border-r border-[#7f9fd8]">
            <div class="flex h-[34px] shrink-0 p-[2px] pr-[3px] border-b border-[#123a86] bg-linear-to-r from-[#c4f0ff] to-[#9ebef5]">
                <div class="flex-1 bg-linear-to-b from-[#dfeafc] to-[#86a9e4]"></div>
            </div>
            <div class="flex h-[22px] bg-linear-to-b from-[#dfeafc] to-[#86a9e4]">
                <button class="px-[6px] ml-px bg-[#b9dcfb] border-r border-b border-[#123a86]">Сдвинуть</button>
            </div>
        </div>
    </footer>
</div>
</body>
</html>
